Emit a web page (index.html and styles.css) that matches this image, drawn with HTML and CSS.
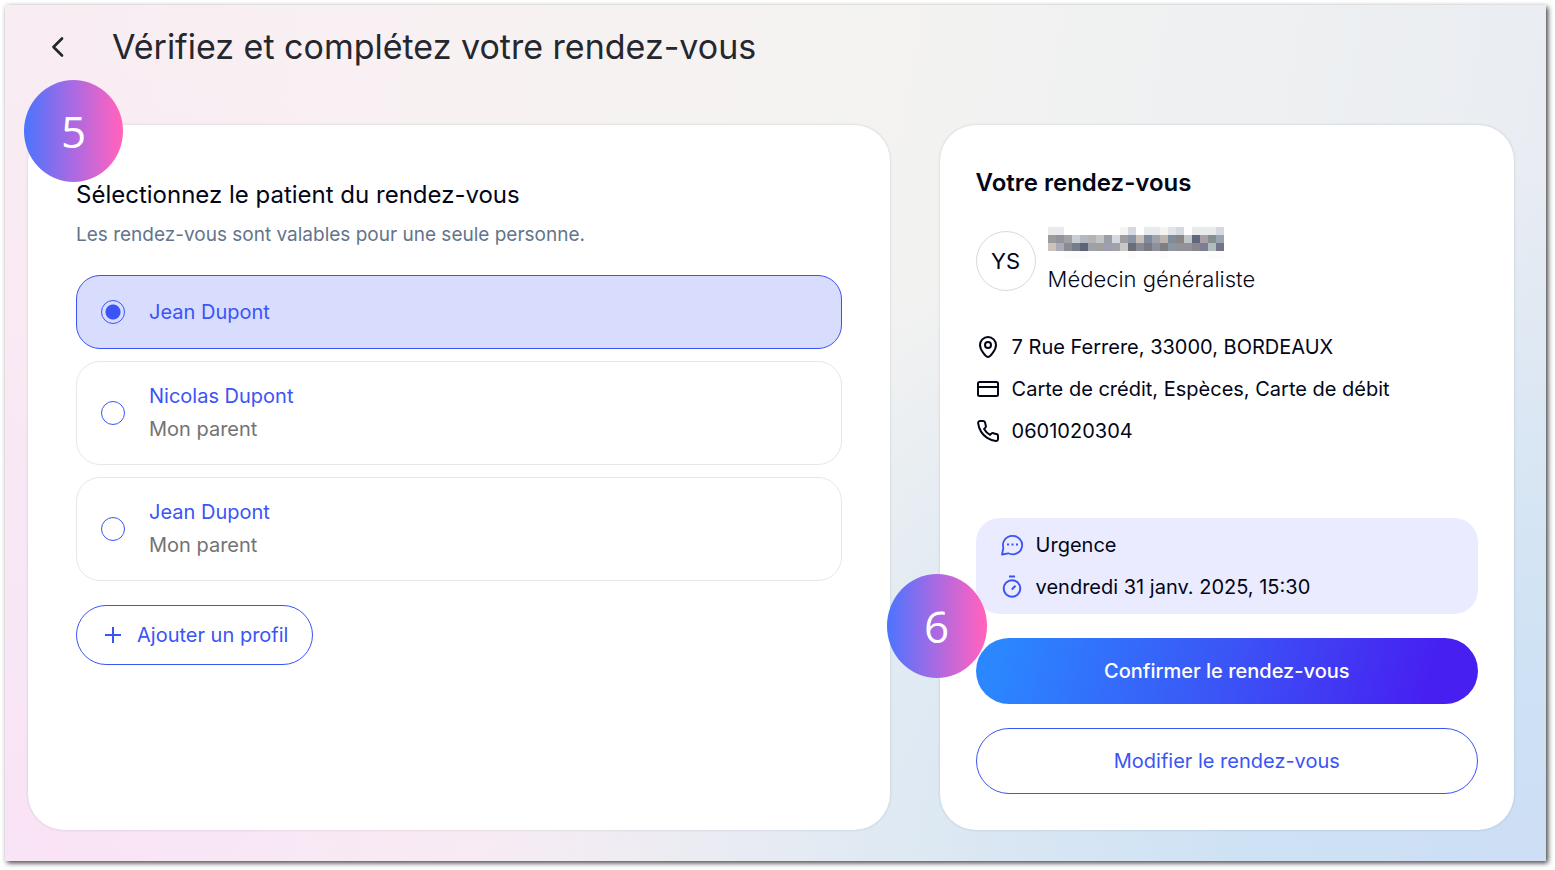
FILE: index.html
```html
<!DOCTYPE html>
<html lang="fr">
<head>
<meta charset="utf-8">
<meta name="viewport" content="width=device-width, initial-scale=1">
<title>Vérifiez et complétez votre rendez-vous</title>
<link rel="stylesheet" href="styles.css">
</head>
<body>
<div class="page">
  <header class="header">
    <button class="back" type="button" aria-label="Retour">
      <svg width="24" height="24" viewBox="0 0 24 24" fill="none" stroke="currentColor" stroke-width="2.700" stroke-linecap="round" stroke-linejoin="round"><path d="M16 3.500 7.500 12l8.500 8.500"/></svg>
    </button>
    <h1 class="title">Vérifiez et complétez votre rendez-vous</h1>
  </header>

  <main class="columns">
    <section class="card patients">
      <span class="step step-five">5</span>
      <h2 class="patients-title">Sélectionnez le patient du rendez-vous</h2>
      <p class="patients-note">Les rendez-vous sont valables pour une seule personne.</p>
      <div class="options">
        <label class="option option-selected">
          <input class="radio" type="radio" name="patient" checked>
          <span class="person"><span class="name">Jean Dupont</span></span>
        </label>
        <label class="option">
          <input class="radio" type="radio" name="patient">
          <span class="person"><span class="name">Nicolas Dupont</span><span class="relation">Mon parent</span></span>
        </label>
        <label class="option">
          <input class="radio" type="radio" name="patient">
          <span class="person"><span class="name">Jean Dupont</span><span class="relation">Mon parent</span></span>
        </label>
      </div>
      <button class="add" type="button">
        <svg width="24" height="24" viewBox="0 0 24 24" fill="none" stroke="currentColor" stroke-width="2"><path d="M12 4v16M4 12h16"/></svg>
        Ajouter un profil
      </button>
    </section>

    <section class="card summary">
      <h2 class="summary-title">Votre rendez-vous</h2>
      <div class="doctor">
        <span class="avatar">YS</span>
        <div class="doctor-text">
          <svg class="masked" width="176" height="32" viewBox="0 0 22 4" shape-rendering="crispEdges" aria-hidden="true">
            <path fill="#e8eaec" d="M0 0h2v1H0zM12 0h2v1h-2zM18 0h3v1h-3z"/>
            <path fill="#f5f4f2" d="M9 0h1v1H9zM14 0h1v1h-1z"/>
            <path fill="#d5d9e0" d="M10 0h1v1h-1zM16 0h1v1h-1zM21 0h1v1h-1z"/>
            <path fill="#e1e4e9" d="M15 0h1v1h-1z"/>
            <path fill="#fcfcfc" d="M2 3h3v1H2zM10 3h1v1h-1zM14 3h1v1h-1zM20 3h2v1h-2z"/>
            <path fill="#9a9b9c" d="M0 1h1v1H0z"/><path fill="#92939e" d="M1 1h1v1H1z"/><path fill="#a1a1a6" d="M2 1h1v1H2z"/>
            <path fill="#cacdd1" d="M3 1h1v1H3z"/><path fill="#b3b9c4" d="M4 1h1v1H4z"/><path fill="#b4b4b3" d="M5 1h1v1H5z"/>
            <path fill="#bfc5c8" d="M6 1h1v1H6z"/><path fill="#9f9da6" d="M7 1h1v1H7z"/><path fill="#d3d9e2" d="M8 1h1v1H8z"/>
            <path fill="#9e9da2" d="M9 1h1v1H9z"/><path fill="#8d94a3" d="M10 1h1v1h-1z"/><path fill="#c8beba" d="M11 1h1v1h-1z"/>
            <path fill="#7e8b9d" d="M12 1h1v1h-1z"/><path fill="#9ea2ac" d="M13 1h1v1h-1z"/><path fill="#beb5af" d="M14 1h1v1h-1z"/>
            <path fill="#7f8d9b" d="M15 1h1v1h-1z"/><path fill="#898485" d="M16 1h1v1h-1z"/><path fill="#c0c5c8" d="M17 1h1v1h-1z"/>
            <path fill="#5d687c" d="M18 1h1v1h-1z"/><path fill="#a99fa8" d="M19 1h1v1h-1z"/><path fill="#848f8f" d="M20 1h1v1h-1z"/><path fill="#9ca5af" d="M21 1h1v1h-1z"/>
            <path fill="#cdc1be" d="M0 2h1v1H0z"/><path fill="#a9abb5" d="M1 2h1v1H1z"/><path fill="#8a8c92" d="M2 2h1v1H2z"/>
            <path fill="#757d88" d="M3 2h1v1H3z"/><path fill="#5c6575" d="M4 2h1v1H4z"/><path fill="#9da1a9" d="M5 2h1v1H5z"/>
            <path fill="#a0a19f" d="M6 2h1v1H6z"/><path fill="#9e9eb0" d="M7 2h1v1H7z"/><path fill="#a2a2a6" d="M8 2h1v1H8z"/>
            <path fill="#c9c7c5" d="M9 2h1v1H9z"/><path fill="#6b6d78" d="M10 2h1v1h-1z"/><path fill="#878c94" d="M11 2h1v1h-1z"/>
            <path fill="#7a7a83" d="M12 2h1v1h-1z"/><path fill="#8d909c" d="M13 2h1v1h-1z"/><path fill="#7e7f83" d="M14 2h1v1h-1z"/>
            <path fill="#8b979f" d="M15 2h1v1h-1z"/><path fill="#919197" d="M16 2h2v1h-2z"/><path fill="#87868c" d="M18 2h1v1h-1z"/>
            <path fill="#7c7d91" d="M19 2h1v1h-1z"/><path fill="#b2bbbd" d="M20 2h1v1h-1z"/><path fill="#707685" d="M21 2h1v1h-1z"/>
          </svg>
          <span class="specialty">Médecin généraliste</span>
        </div>
      </div>
      <ul class="details">
        <li class="detail">
          <svg width="24" height="24" viewBox="0 0 24 24" fill="none" stroke="currentColor" stroke-width="2" stroke-linejoin="round"><path d="M12 22c-1.500 0-8-6.500-8-12a8 8 0 0 1 16 0c0 5.500-6.500 12-8 12z"/><circle cx="12" cy="10" r="3"/></svg>
          7 Rue Ferrere, 33000, BORDEAUX
        </li>
        <li class="detail">
          <svg width="24" height="24" viewBox="0 0 24 24" fill="none" stroke="currentColor" stroke-width="2" stroke-linejoin="round"><rect x="2" y="5" width="20" height="14" rx="1.500"/><path d="M2 10h20"/></svg>
          Carte de crédit, Espèces, Carte de débit
        </li>
        <li class="detail">
          <svg width="24" height="24" viewBox="0 0 24 24" fill="none" stroke="currentColor" stroke-width="2" stroke-linecap="round" stroke-linejoin="round"><path d="M22 16.920v3a2 2 0 0 1-2.180 2 19.790 19.790 0 0 1-8.630-3.070 19.500 19.500 0 0 1-6-6 19.790 19.790 0 0 1-3.070-8.670A2 2 0 0 1 4.110 2h3a2 2 0 0 1 2 1.720c.127.960.361 1.903.7 2.810a2 2 0 0 1-.45 2.110L8.090 9.910a16 16 0 0 0 6 6l1.270-1.270a2 2 0 0 1 2.110-.45c.907.339 1.850.573 2.810.7A2 2 0 0 1 22 16.920z"/></svg>
          0601020304
        </li>
      </ul>
      <ul class="slot">
        <li class="detail">
          <svg class="accent" width="24" height="24" viewBox="0 0 24 24" fill="none" stroke="currentColor" stroke-width="1.800" stroke-linejoin="round"><path d="M3.400 14.800a9.600 9.200 0 1 1 4.900 5.500L2 21.500z"/><path d="M7 11.500h2M11.500 11.500h2M16 11.500h2"/></svg>
          Urgence
        </li>
        <li class="detail">
          <svg class="accent" width="24" height="24" viewBox="0 0 24 24" fill="none" stroke="currentColor" stroke-width="2"><circle cx="12" cy="13.500" r="8.300"/><path d="M9 1.500h6M11.800 14.500l3.700-3.700"/></svg>
          vendredi 31 janv. 2025, 15:30
        </li>
      </ul>
      <div class="actions">
        <span class="step step-six">6</span>
        <button class="action confirm" type="button">Confirmer le rendez-vous</button>
        <button class="action modify" type="button">Modifier le rendez-vous</button>
      </div>
    </section>
  </main>
</div>
</body>
</html>
```
FILE: styles.css
```css
* { box-sizing: border-box; }

body {
  margin: 0;
  padding: 5px 9px 9px 5px;
  min-height: 100vh;
  display: flex;
  background: #fff;
  color: #020617;
  font-family: Inter, "Liberation Sans", sans-serif;
  font-size: 20px;
  line-height: 24px;
}

h1, h2, p, ul { margin: 0; padding: 0; font-weight: 400; }
ul { list-style: none; }
button { font: inherit; cursor: pointer; }
svg { flex: none; display: block; }

.page {
  flex: 1;
  display: flex;
  flex-direction: column;
  padding: 0 32px 31px 23px;
  background:
    radial-gradient(ellipse 1050px 700px at 100% 100%, #cddef5 0%, #cfe2f4 30%, rgba(207, 226, 244, 0) 100%),
    radial-gradient(ellipse 900px 800px at 0% 100%, #f9e3f6 0%, rgba(249, 231, 244, 0) 100%),
    linear-gradient(100deg, #f9ecf2 0%, #f8f1f2 25%, #f4f3f1 50%, #eef0f1 75%, #e7ebf3 100%);
  box-shadow: 2px 2px 5px rgba(0, 0, 0, 0.75);
}

.header {
  display: flex;
  align-items: center;
  gap: 42px;
  height: 84px;
  margin-bottom: 36px;
  padding-left: 18px;
  color: #25272f;
}

.back {
  display: flex;
  padding: 0;
  border: 0;
  background: none;
  color: inherit;
}

.title { font-size: 34px; line-height: 48px; }

.columns {
  flex: 1;
  display: grid;
  grid-template-columns: 3fr 2fr;
  gap: 50px;
}

.card {
  position: relative;
  display: flex;
  flex-direction: column;
  border-radius: 36px;
  background: #fff;
  box-shadow: 0 0 3px rgba(15, 23, 42, 0.16);
}

.patients { align-items: flex-start; padding: 54px 48px 48px; }
.patients-title { font-size: 24px; line-height: 32px; }
.patients-note { margin: 12px 0 28px; color: #64748b; font-size: 19px; }

.options {
  align-self: stretch;
  display: flex;
  flex-direction: column;
  gap: 12px;
}

.option {
  display: flex;
  align-items: center;
  gap: 24px;
  min-height: 74px;
  padding: 18px 24px;
  border: 1px solid #e5e7eb;
  border-radius: 24px;
}

.option-selected { border-color: #3b54f6; background: #d8dcfd; }

.radio {
  appearance: none;
  width: 24px;
  height: 24px;
  margin: 0;
  border: 1px solid #3b54f6;
  border-radius: 50%;
}

.radio:checked { background: radial-gradient(circle, #3b54f6 7px, transparent 8px); }

.person { display: flex; flex-direction: column; line-height: 33px; }
.name { color: #3b54f6; }
.relation { color: #737373; }

.add {
  display: flex;
  align-items: center;
  gap: 12px;
  height: 60px;
  margin-top: 24px;
  padding: 0 24px;
  border: 1px solid #3b54f6;
  border-radius: 30px;
  background: #fff;
  color: #3b54f6;
}

.summary { padding: 36px; }
.summary-title { font-size: 24px; font-weight: 600; line-height: 44px; }

.doctor { display: flex; align-items: center; gap: 12px; margin-top: 22px; }

.avatar {
  display: grid;
  place-items: center;
  width: 60px;
  height: 60px;
  border: 1px solid #d9dadd;
  border-radius: 50%;
  font-size: 22px;
}

.doctor-text { display: flex; flex-direction: column; gap: 4px; }
.specialty { font-size: 22px; font-weight: 300; line-height: 32px; }

.details { display: flex; flex-direction: column; gap: 18px; margin-top: 40px; }
.detail { display: flex; align-items: center; gap: 12px; }

.slot {
  display: flex;
  flex-direction: column;
  gap: 18px;
  margin-top: auto;
  padding: 15px 24px;
  border-radius: 24px;
  background: #eaebfe;
}

.accent { color: #3b54f6; }

.actions {
  position: relative;
  display: flex;
  flex-direction: column;
  gap: 24px;
  margin-top: 24px;
}

.action {
  height: 66px;
  padding: 0 24px;
  border: 1px solid #3b54f6;
  border-radius: 33px;
  background: #fff;
  color: #3b54f6;
}

.confirm {
  border: 0;
  background: linear-gradient(105deg, #2b87ff 5%, #3b54f6 50%, #471ff1 90%);
  color: #fff;
  font-weight: 500;
}

.step {
  position: absolute;
  display: grid;
  place-items: center;
  border-radius: 50%;
  background: linear-gradient(90deg, #4b74ff, #a76ae3 48%, #ff62bf 96%);
  color: #fff;
  font-family: "Open Sans", "Noto Sans", sans-serif;
  font-size: 44px;
  line-height: 60px;
}

.step-five { top: -45px; left: -4px; width: 99px; height: 102px; }
.step-six { top: -64px; left: -89px; width: 100px; height: 104px; }
```
